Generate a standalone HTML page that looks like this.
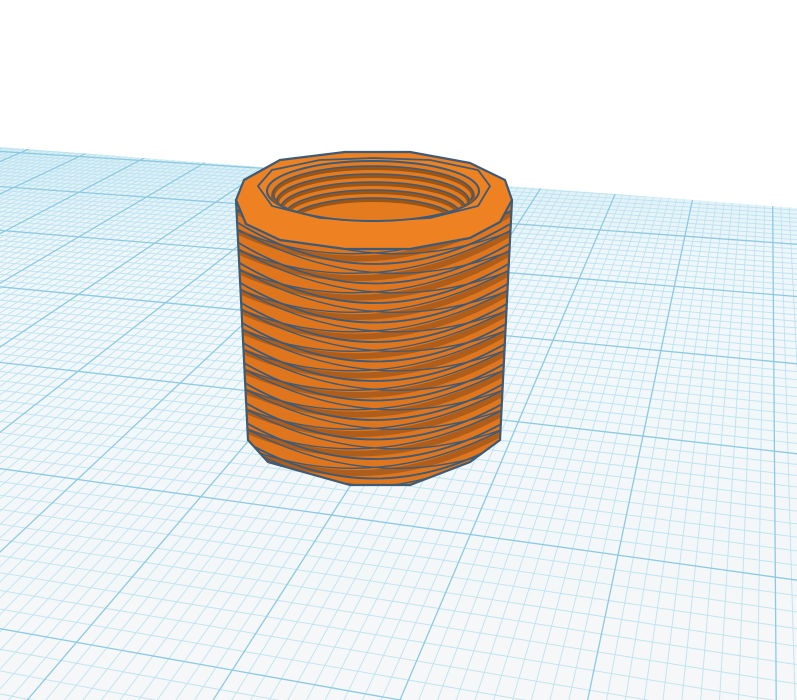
<!DOCTYPE html><html><head><meta charset="utf-8"><style>html,body{margin:0;padding:0;background:#fff;width:797px;height:700px;overflow:hidden}svg{display:block;overflow:hidden;position:absolute;left:0;top:0}</style></head><body>
<svg id="s" width="797" height="700" viewBox="0 0 797 700" xmlns="http://www.w3.org/2000/svg">
<defs>
<linearGradient id="pl" x1="0" y1="0" x2="0" y2="1"><stop offset="0" stop-color="#d8eef6"/><stop offset="0.2" stop-color="#f0f7fa"/><stop offset="1" stop-color="#f6f7f8"/></linearGradient>
<clipPath id="gc"><polygon points="0,147 797,208 797,700 0,700"/></clipPath>
<clipPath id="bc"><path d="M236,200 L248,440 L268,462 L350,485 L410,485 L470,462 L500,440 L512,200 Z"/></clipPath>
<clipPath id="hc"><ellipse cx="373" cy="191" rx="106" ry="30"/></clipPath>
</defs>
<rect width="797" height="700" fill="#fff"/>
<polygon points="0,147 797,208 797,700 0,700" fill="url(#pl)"/>
<g id="grid" clip-path="url(#gc)"></g>
<g id="obj">
<path d="M236,200 L248,440 L268,462 L350,485 L410,485 L470,462 L500,440 L512,200 Z" fill="#df761d"/>
<g id="knurl" clip-path="url(#bc)"></g>
<path d="M236,200 L248,440 L268,462 L350,485 L410,485 L470,462 L500,440 L512,200" fill="none" stroke="#3f5a75" stroke-width="2.2"/>
<polygon points="236,200 244,180 280,160 345,152 410,152 470,163 505,180 512,200 500,222 470,238 410,249 345,249 280,240 246,224" fill="#ee8222" stroke="#3f5a75" stroke-width="2.2" stroke-linejoin="round"/>
<polygon points="258,186 272,170 320,160 373,158 430,160 478,170 490,186 478,206 430,218 373,221 320,218 272,206" fill="#ec8221" stroke="#3f5a75" stroke-width="1.8"/>
<ellipse cx="373" cy="191" rx="106" ry="30" fill="#e47c1f" stroke="#3f5a75" stroke-width="2"/>
<g id="thr" clip-path="url(#hc)"></g>
</g>
</svg>
<script>
(function(){
var NS="http://www.w3.org/2000/svg";
function el(p,t,a){var e=document.createElementNS(NS,t);for(var k in a)e.setAttribute(k,a[k]);p.appendChild(e);return e;}
var g=document.getElementById('grid');
var O=[400,700],V1=[770,-170],V2=[-4180,-117],a=0.0235,b=0.0038;
function P(u,v){var w=1+u*a+v*b;return [(O[0]+u*a*V1[0]+v*b*V2[0])/w,(O[1]+u*a*V1[1]+v*b*V2[1])/w,w];}
function line(p,q,maj){el(g,'line',{x1:p[0].toFixed(1),y1:p[1].toFixed(1),x2:q[0].toFixed(1),y2:q[1].toFixed(1),stroke:maj?'#8ccae2':'#bde3f1','stroke-width':maj?1.3:0.9});}
var fine=[],maj=[];
for(var u=-60;u<=70;u++){
  var vmin=Math.max(-50,(0.06-1-u*a)/b+1),vmax=130;
  if(vmin>=vmax)continue;
  (u%10==0?maj:fine).push([P(u,vmin),P(u,vmax)]);
}
for(var v=-50;v<=130;v++){
  var umin=Math.max(-60,(0.06-1-v*b)/a+1),umax=70;
  if(umin>=umax)continue;
  (v%10==0?maj:fine).push([P(umin,v),P(umax,v)]);
}
fine.forEach(function(l){line(l[0],l[1],false)});
maj.forEach(function(l){line(l[0],l[1],true)});
var k=document.getElementById('knurl');
for(var y=150;y<540;y+=19.5){
  el(k,'path',{d:'M230,'+(y)+' Q374,'+(y+70)+' 520,'+(y-20),fill:'none',stroke:'#a1581a','stroke-width':6,opacity:0.8});
}
for(var y=130;y<560;y+=19.5){
  el(k,'path',{d:'M230,'+y+' Q374,'+(y+62)+' 520,'+(y-22),fill:'none',stroke:'#3f5a75','stroke-width':1.4});
  el(k,'path',{d:'M230,'+(y-22)+' Q374,'+(y+62)+' 520,'+y,fill:'none',stroke:'#3f5a75','stroke-width':1.4});
}
for(var y=218;y<470;y+=19.5){
  el(k,'path',{d:'M230,'+y+' Q374,'+(y+92)+' 520,'+y,fill:'none',stroke:'#3f5a75','stroke-width':1.8});
}
var t=document.getElementById('thr');
for(var i=0;i<5;i++){
  var cy=196+i*7,rx=100-i*4,ry=28-i*1;
  el(t,'ellipse',{cx:373,cy:cy,rx:rx,ry:ry,fill:'none',stroke:'#9b5516','stroke-width':4});
  el(t,'ellipse',{cx:373,cy:cy-2,rx:rx,ry:ry,fill:'none',stroke:'#3f5a75','stroke-width':1.5});
}
})();
</script>
</body></html>
